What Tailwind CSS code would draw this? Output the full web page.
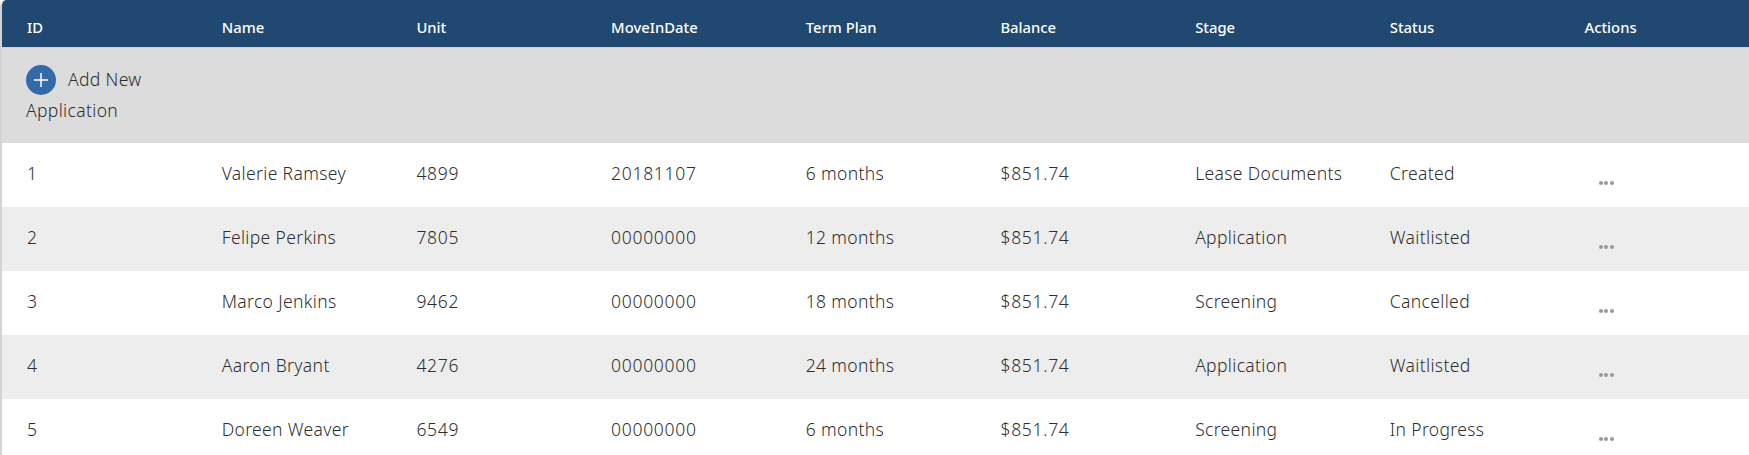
<!DOCTYPE html>
<html lang="en">
<head>
    <meta charset="UTF-8" />
    <title>Applications</title>
    <script src="https://cdn.jsdelivr.net/npm/@tailwindcss/browser@4"></script>
</head>
<body class="bg-white h-screen overflow-hidden font-['Noto_Sans',sans-serif]">
    <div class="w-full border-l-2 border-[#d4d4d4] rounded-tl-md overflow-hidden">
        <table class="table-fixed w-[1752px] text-left text-[17.5px] font-light text-[#2e2e2e] tracking-[0.35px]">
            <thead class="bg-[#214871] text-white text-[14.8px] tracking-normal">
                <tr class="h-[47px] border-b border-[#c9d0d8]">
                    <th class="w-[194.7px] pl-[25px] pt-[7px] font-medium">ID</th>
                    <th class="w-[194.7px] pl-[25px] pt-[7px] font-medium">Name</th>
                    <th class="w-[194.7px] pl-[25px] pt-[7px] font-medium">Unit</th>
                    <th class="w-[194.7px] pl-[25px] pt-[7px] font-medium">MoveInDate</th>
                    <th class="w-[194.7px] pl-[25px] pt-[7px] font-medium">Term Plan</th>
                    <th class="w-[194.7px] pl-[25px] pt-[7px] font-medium">Balance</th>
                    <th class="w-[194.7px] pl-[25px] pt-[7px] font-medium">Stage</th>
                    <th class="w-[194.7px] pl-[25px] pt-[7px] font-medium">Status</th>
                    <th class="w-[194.7px] pl-[25px] pt-[7px] font-medium">Actions</th>
                </tr>
            </thead>
            <tbody>
                <!-- add new row -->
                <tr class="h-[96px] bg-[#dcdcdc]">
                    <td class="pl-[24px] leading-[26px] pb-[3px]" colspan="9">
                        <div class="w-[150px]">
                            <span class="inline-flex items-center justify-center align-middle w-[30px] h-[30px] rounded-full bg-[#346aa9] mr-[12px]">
                                <svg class="w-[16px] h-[16px]" viewBox="0 0 16 16" fill="none" stroke="white" stroke-width="1.5"><path d="M8 1v14M1 8h14" /></svg>
                            </span><span class="align-middle">Add New Application</span>
                        </div>
                    </td>
                </tr>

                <tr class="h-[64px] bg-white">
                    <td class="pl-[25px] pb-[4px] tracking-[0.7px]">1</td>
                    <td class="pl-[25px] pb-[4px]">Valerie Ramsey</td>
                    <td class="pl-[25px] pb-[4px] tracking-[0.7px]">4899</td>
                    <td class="pl-[25px] pb-[4px] tracking-[0.7px]">20181107</td>
                    <td class="pl-[25px] pb-[4px]">6 months</td>
                    <td class="pl-[25px] pb-[4px] tracking-[0.7px]">$851.74</td>
                    <td class="pl-[25px] pb-[4px]">Lease Documents</td>
                    <td class="pl-[25px] pb-[4px]">Created</td>
                    <td class="pl-[25px]"><div class="flex gap-[1.5px] ml-[14px] mt-[15px]"><i class="w-1 h-1 rounded-full bg-[#999]"></i><i class="w-1 h-1 rounded-full bg-[#999]"></i><i class="w-1 h-1 rounded-full bg-[#999]"></i></div></td>
                </tr>
                <tr class="h-[64px] bg-[#ededed]">
                    <td class="pl-[25px] pb-[4px] tracking-[0.7px]">2</td>
                    <td class="pl-[25px] pb-[4px]">Felipe Perkins</td>
                    <td class="pl-[25px] pb-[4px] tracking-[0.7px]">7805</td>
                    <td class="pl-[25px] pb-[4px] tracking-[0.7px]">00000000</td>
                    <td class="pl-[25px] pb-[4px]">12 months</td>
                    <td class="pl-[25px] pb-[4px] tracking-[0.7px]">$851.74</td>
                    <td class="pl-[25px] pb-[4px]">Application</td>
                    <td class="pl-[25px] pb-[4px]">Waitlisted</td>
                    <td class="pl-[25px]"><div class="flex gap-[1.5px] ml-[14px] mt-[15px]"><i class="w-1 h-1 rounded-full bg-[#999]"></i><i class="w-1 h-1 rounded-full bg-[#999]"></i><i class="w-1 h-1 rounded-full bg-[#999]"></i></div></td>
                </tr>
                <tr class="h-[64px] bg-white">
                    <td class="pl-[25px] pb-[4px] tracking-[0.7px]">3</td>
                    <td class="pl-[25px] pb-[4px]">Marco Jenkins</td>
                    <td class="pl-[25px] pb-[4px] tracking-[0.7px]">9462</td>
                    <td class="pl-[25px] pb-[4px] tracking-[0.7px]">00000000</td>
                    <td class="pl-[25px] pb-[4px]">18 months</td>
                    <td class="pl-[25px] pb-[4px] tracking-[0.7px]">$851.74</td>
                    <td class="pl-[25px] pb-[4px]">Screening</td>
                    <td class="pl-[25px] pb-[4px]">Cancelled</td>
                    <td class="pl-[25px]"><div class="flex gap-[1.5px] ml-[14px] mt-[15px]"><i class="w-1 h-1 rounded-full bg-[#999]"></i><i class="w-1 h-1 rounded-full bg-[#999]"></i><i class="w-1 h-1 rounded-full bg-[#999]"></i></div></td>
                </tr>
                <tr class="h-[64px] bg-[#ededed]">
                    <td class="pl-[25px] pb-[4px] tracking-[0.7px]">4</td>
                    <td class="pl-[25px] pb-[4px]">Aaron Bryant</td>
                    <td class="pl-[25px] pb-[4px] tracking-[0.7px]">4276</td>
                    <td class="pl-[25px] pb-[4px] tracking-[0.7px]">00000000</td>
                    <td class="pl-[25px] pb-[4px]">24 months</td>
                    <td class="pl-[25px] pb-[4px] tracking-[0.7px]">$851.74</td>
                    <td class="pl-[25px] pb-[4px]">Application</td>
                    <td class="pl-[25px] pb-[4px]">Waitlisted</td>
                    <td class="pl-[25px]"><div class="flex gap-[1.5px] ml-[14px] mt-[15px]"><i class="w-1 h-1 rounded-full bg-[#999]"></i><i class="w-1 h-1 rounded-full bg-[#999]"></i><i class="w-1 h-1 rounded-full bg-[#999]"></i></div></td>
                </tr>
                <tr class="h-[64px] bg-white">
                    <td class="pl-[25px] pb-[4px] tracking-[0.7px]">5</td>
                    <td class="pl-[25px] pb-[4px]">Doreen Weaver</td>
                    <td class="pl-[25px] pb-[4px] tracking-[0.7px]">6549</td>
                    <td class="pl-[25px] pb-[4px] tracking-[0.7px]">00000000</td>
                    <td class="pl-[25px] pb-[4px]">6 months</td>
                    <td class="pl-[25px] pb-[4px] tracking-[0.7px]">$851.74</td>
                    <td class="pl-[25px] pb-[4px]">Screening</td>
                    <td class="pl-[25px] pb-[4px]">In Progress</td>
                    <td class="pl-[25px]"><div class="flex gap-[1.5px] ml-[14px] mt-[15px]"><i class="w-1 h-1 rounded-full bg-[#999]"></i><i class="w-1 h-1 rounded-full bg-[#999]"></i><i class="w-1 h-1 rounded-full bg-[#999]"></i></div></td>
                </tr>
            </tbody>
        </table>
    </div>
</body>
</html>
